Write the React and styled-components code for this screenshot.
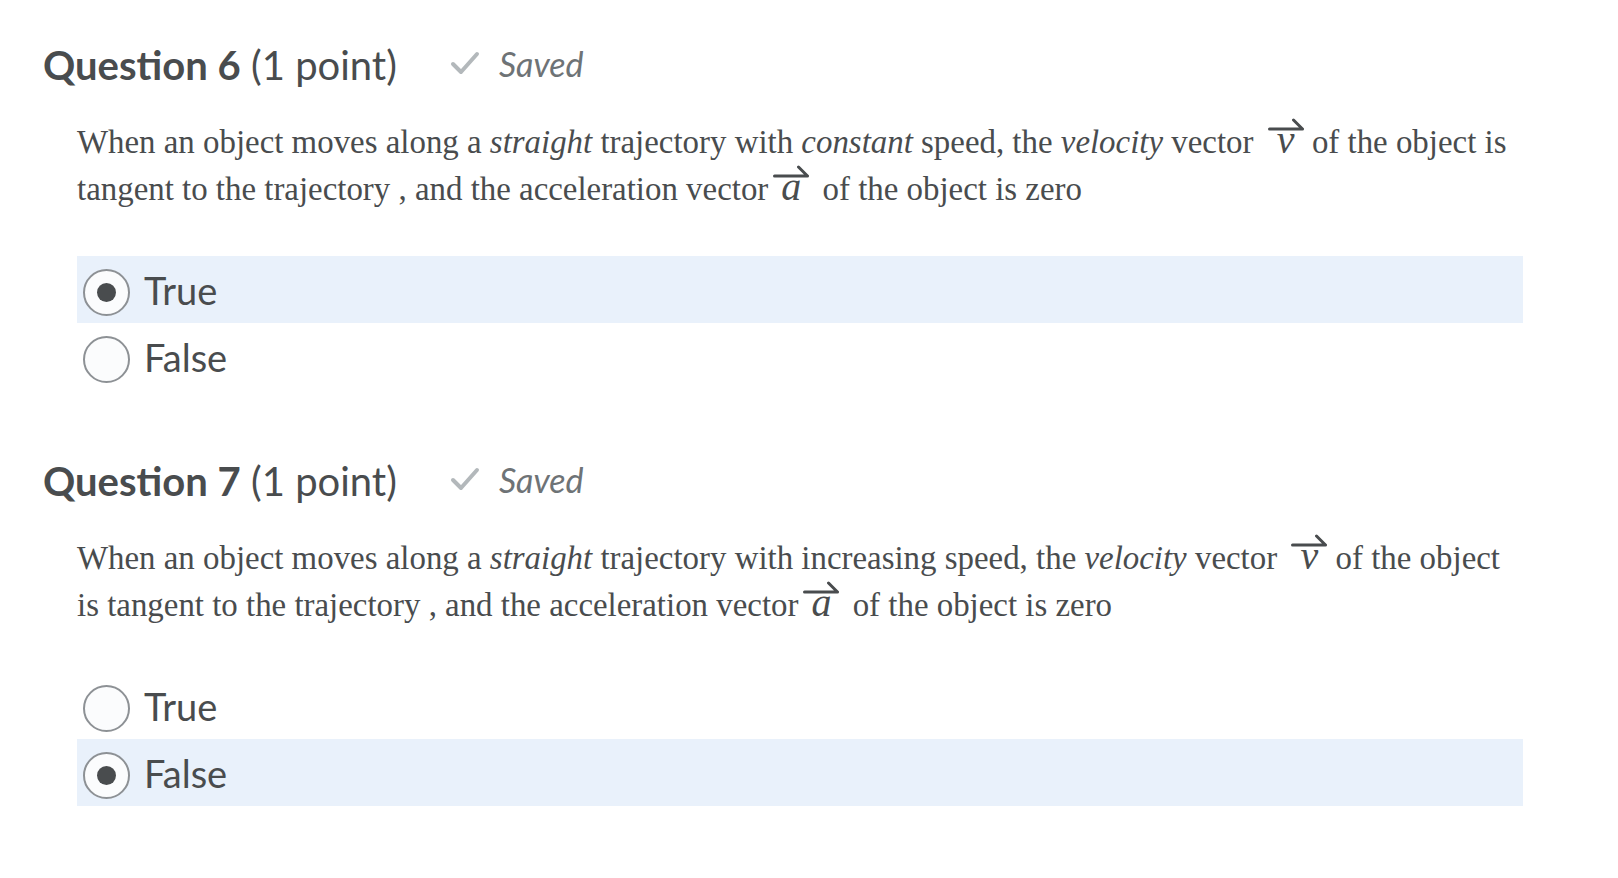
import React from "react";
import styled, { createGlobalStyle } from "styled-components";

const GlobalStyle = createGlobalStyle`
  html, body {
    margin: 0;
    padding: 0;
    background: #ffffff;
  }
  body {
    font-family: "Lato", "Noto Sans", sans-serif;
    color: #494c4e;
  }
`;

const questions = [
  {
    id: 6,
    parts: [
      "When an object moves along a ",
      { em: "straight" },
      " trajectory with ",
      { em: "constant" },
      " speed, the ",
      { em: "velocity" },
      " vector ",
      { vec: "v", before: 6, after: 0 },
      " of the object is tangent to the trajectory , and the acceleration vector",
      { vec: "a", before: 5, after: 5 },
      " of the object is zero",
    ],
    selected: 0,
  },
  {
    id: 7,
    parts: [
      "When an object moves along a ",
      { em: "straight" },
      " trajectory with increasing speed, the ",
      { em: "velocity" },
      " vector ",
      { vec: "v", before: 6, after: 0 },
      " of the object is tangent to the trajectory , and the acceleration vector",
      { vec: "a", before: 5, after: 5 },
      " of the object is zero",
    ],
    selected: 1,
  },
];

export default function App() {
  return (
    <>
      <GlobalStyle />
      <Page>
        {questions.map((q) => (
          <Question key={q.id}>
            <Header>
              <Title>
                <strong>Question {q.id}</strong> (1 point)
              </Title>
              <SavedTag>
                <CheckIcon />
                <span>Saved</span>
              </SavedTag>
            </Header>
            <Body>
              <Prompt>
                {q.parts.map((p, i) => {
                  if (typeof p === "string") return p;
                  if (p.em) return <em key={i}>{p.em}</em>;
                  return (
                    <Vec key={i} $before={p.before} $after={p.after}>
                      <VecArrow />
                      {p.vec}
                    </Vec>
                  );
                })}
              </Prompt>
              <Options>
                {["True", "False"].map((label, i) => (
                  <Option key={label} $selected={q.selected === i}>
                    <Radio $checked={q.selected === i} />
                    <OptionLabel>{label}</OptionLabel>
                  </Option>
                ))}
              </Options>
            </Body>
          </Question>
        ))}
      </Page>
    </>
  );
}

function CheckIcon() {
  return (
    <svg width="30" height="24" viewBox="0 0 30 24" fill="none">
      <path
        d="M3 13 L11 21 L27 3"
        stroke="#b3b8bb"
        strokeWidth="4"
        strokeLinecap="round"
        strokeLinejoin="round"
      />
    </svg>
  );
}

function VecArrow() {
  return (
    <ArrowSvg viewBox="0 0 36 14" fill="none">
      <path
        d="M1.5 11 H34.5 M34.5 11 L25.5 2"
        stroke="#494c4e"
        strokeWidth="3"
        strokeLinecap="round"
      />
    </ArrowSvg>
  );
}

const Page = styled.main`
  padding: 40px 0 40px 43px;
`;

const Question = styled.section`
  & + & {
    margin-top: 66px;
  }
`;

const Header = styled.div`
  display: flex;
  align-items: center;
  height: 50px;
  gap: 53px;
`;

const Title = styled.h2`
  margin: 0;
  font-family: "Lato", sans-serif;
  font-size: 40px;
  font-weight: 400;
  color: #494c4e;
  strong {
    font-weight: 700;
  }
`;

const SavedTag = styled.div`
  display: flex;
  align-items: center;
  gap: 19px;
  font-family: "Lato", sans-serif;
  font-style: italic;
  font-size: 34px;
  color: #6e7376;
  margin-top: -4px;
`;

const Body = styled.div`
  margin-left: 34px;
  width: 1446px;
`;

const Prompt = styled.p`
  margin: 29px 0 0;
  font-family: "Liberation Serif", "Times New Roman", serif;
  font-size: 32.9px;
  line-height: 47px;
  color: #494c4e;
  em {
    font-style: italic;
  }
`;

const Vec = styled.span`
  position: relative;
  display: inline-block;
  width: 36px;
  text-align: center;
  margin-left: ${(p) => p.$before}px;
  margin-right: ${(p) => p.$after}px;
  font-style: italic;
  font-size: 40px;
  line-height: 1;
`;

const ArrowSvg = styled.svg`
  position: absolute;
  left: 0;
  top: -2px;
  width: 36px;
  height: 14px;
`;

const Options = styled.div`
  margin-top: 43px;
  display: flex;
  flex-direction: column;
`;

const Option = styled.label`
  display: flex;
  align-items: center;
  gap: 14px;
  height: 67px;
  padding-left: 6px;
  background: ${(p) => (p.$selected ? "#e9f1fb" : "transparent")};
`;

const Radio = styled.span`
  box-sizing: border-box;
  width: 47px;
  height: 47px;
  margin-top: 6px;
  border-radius: 50%;
  border: 2px solid #8d9195;
  background: #fbfcfd;
  display: flex;
  align-items: center;
  justify-content: center;
  &::after {
    content: "";
    display: ${(p) => (p.$checked ? "block" : "none")};
    width: 19px;
    height: 19px;
    border-radius: 50%;
    background: #494c4e;
  }
`;

const OptionLabel = styled.span`
  font-family: "Lato", sans-serif;
  font-size: 38px;
  color: #494c4e;
`;
